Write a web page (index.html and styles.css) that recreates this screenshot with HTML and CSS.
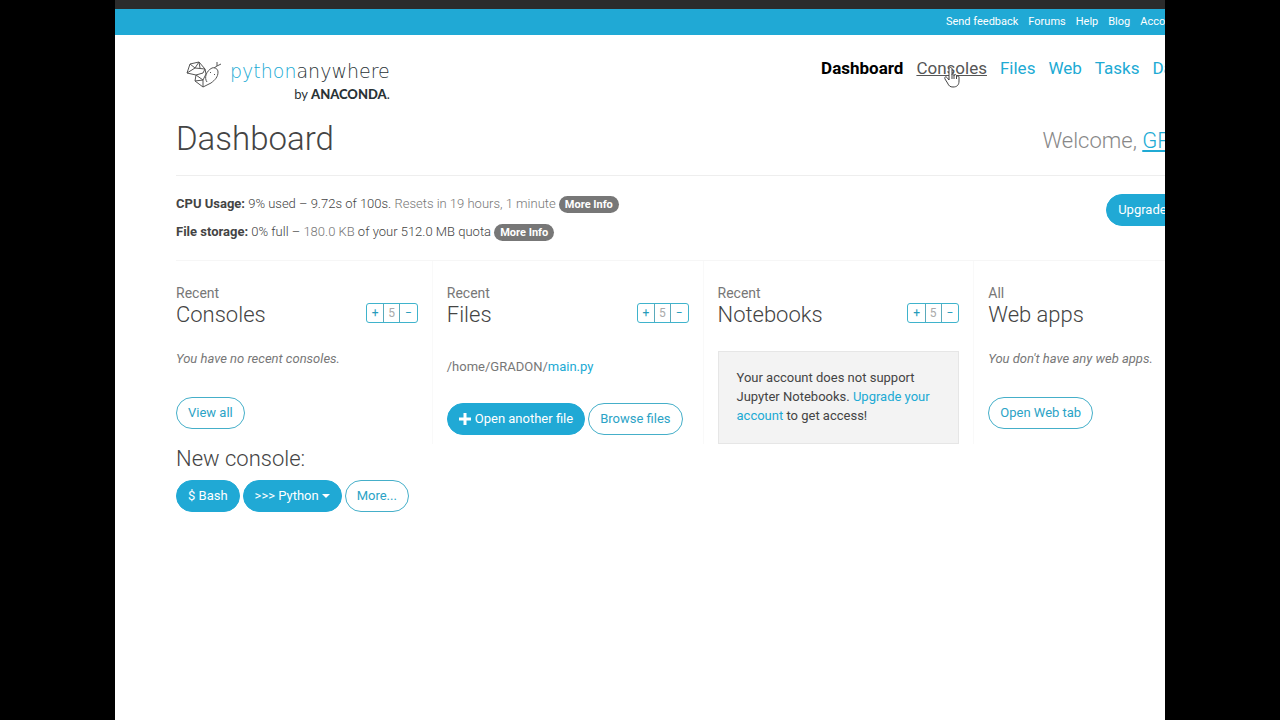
FILE: index.html
```html
<!DOCTYPE html>
<html lang="en">
<head>
<meta charset="utf-8">
<title>Dashboard : PythonAnywhere</title>
<link rel="stylesheet" href="styles.css">
</head>
<body>
<div class="screen">
  <div class="chrome"></div>
  <div class="page">
    <nav class="topbar" aria-label="Account">
      <a href="#">Send feedback</a>
      <a href="#">Forums</a>
      <a href="#">Help</a>
      <a href="#">Blog</a>
      <a href="#">Account</a>
      <a href="#">Log out</a>
    </nav>
    <header class="header">
      <a class="logo" href="#">
        <svg class="logo-mark" viewBox="0 0 36 28" aria-hidden="true">
          <path d="M1 13L4 4L13 2L19 9L20 14M1 13L10 15L17 13L19 9M4 4L9 8L13 2M9 8L1 13M9 8L19 9M13 2L14 8M10 15L9 21L17 27L25 23M10 15L17 20L20 14M9 21L17 20L17 27"/>
          <path d="M21 22C18 18 20 11 26 8C29 7 32 9 32 12C32 17 29 20 25 23M28 8L31 6L31 2M31 6L35 4"/>
          <path d="M24 12L25 13M28 14L29 15"/>
        </svg>
        <span class="logo-text">
          <span class="logo-name"><span class="logo-python">python</span>anywhere</span>
          <span class="logo-by">by <b>ANACONDA</b>.</span>
        </span>
      </a>
      <nav class="mainnav" aria-label="Main">
        <a class="current" href="#">Dashboard</a>
        <a class="hovered" href="#">Consoles<svg class="pointer" viewBox="0 0 16 22" aria-hidden="true"><path d="M5 14V3C5 1 8 1 8 3V9C8 7 10 7 10 9V10C10 8 12.500 8 12.500 10V11C12.500 9.500 15 9.500 15 11V15C15 19 13 21 9 21C6 21 5 20 3.500 17L1 13C0 11 2 10 3 11.500L5 14M8 9V13M10 10V13M12.500 11V13"/></svg></a>
        <a href="#">Files</a>
        <a href="#">Web</a>
        <a href="#">Tasks</a>
        <a href="#">Databases</a>
      </nav>
    </header>
    <main class="content">
      <div class="title">
        <h1>Dashboard</h1>
        <p class="welcome">Welcome, <a href="#">GRADON</a></p>
      </div>
      <section class="usage">
        <div>
          <p><b>CPU Usage:</b> 9% used – 9.72s of 100s. <span class="muted">Resets in 19 hours, 1 minute</span> <button class="info" type="button">More Info</button></p>
          <p><b>File storage:</b> 0% full – <span class="muted">180.0 KB</span> of your 512.0 MB quota <button class="info" type="button">More Info</button></p>
        </div>
        <button class="btn solid" type="button">Upgrade Account</button>
      </section>
      <div class="columns">
        <section class="column">
          <div class="column-head">
            <h2><small>Recent</small>Consoles</h2>
            <div class="stepper"><button type="button" aria-label="More consoles">+</button><span>5</span><button type="button" aria-label="Fewer consoles">−</button></div>
          </div>
          <p class="empty">You have no recent consoles.</p>
          <div class="actions"><button class="btn" type="button">View all</button></div>
        </section>
        <section class="column">
          <div class="column-head">
            <h2><small>Recent</small>Files</h2>
            <div class="stepper"><button type="button" aria-label="More files">+</button><span>5</span><button type="button" aria-label="Fewer files">−</button></div>
          </div>
          <p class="file">/home/GRADON/<a href="#">main.py</a></p>
          <div class="actions">
            <button class="btn solid" type="button"><svg class="plus" viewBox="0 0 12 12" aria-hidden="true"><path d="M6 0V12M0 6H12"/></svg>Open another file</button>
            <button class="btn" type="button">Browse files</button>
          </div>
        </section>
        <section class="column">
          <div class="column-head">
            <h2><small>Recent</small>Notebooks</h2>
            <div class="stepper"><button type="button" aria-label="More notebooks">+</button><span>5</span><button type="button" aria-label="Fewer notebooks">−</button></div>
          </div>
          <p class="notice">Your account does not support Jupyter Notebooks. <a href="#">Upgrade your account</a> to get access!</p>
        </section>
        <section class="column">
          <div class="column-head"><h2><small>All</small>Web apps</h2></div>
          <p class="empty">You don't have any web apps.</p>
          <div class="actions"><button class="btn" type="button">Open Web tab</button></div>
        </section>
      </div>
      <section class="new-console">
        <h2>New console:</h2>
        <div class="actions">
          <button class="btn solid" type="button">$ Bash</button>
          <button class="btn solid" type="button">&gt;&gt;&gt; Python<span class="caret"></span></button>
          <button class="btn" type="button">More...</button>
        </div>
      </section>
    </main>
  </div>
</div>
</body>
</html>
```
FILE: styles.css
```css
* { box-sizing: border-box; }
body { margin: 0; background: #000; color: #444; font: 14px/20px Roboto, sans-serif; }
h1, h2, p { margin: 0; font-weight: 300; }
b { font-weight: 700; }
a { color: #20aad4; text-decoration: none; }
button { font: inherit; cursor: pointer; }
.screen { min-height: 100vh; margin: 0 115px; background: #fff; overflow: hidden; }
.chrome { height: 9px; background: #2b2b2b; }
.page { width: 112%; }
.topbar { display: flex; justify-content: flex-end; gap: 10px; height: 26px; padding: 0 63px; background: #20a9d5; font-size: 11px; line-height: 26px; }
.topbar a { color: #fff; }
.header { display: flex; justify-content: space-between; align-items: flex-start; padding: 23px 58px 0 61px; }
.logo { display: flex; gap: 8px; padding-left: 10px; color: #2a3336; }
.logo-mark { width: 36px; height: 28px; margin-top: 2px; fill: none; stroke: #555; stroke-width: 1; }
.logo-text { display: flex; flex-direction: column; align-items: flex-end; }
.logo-name { font: 200 19px/27px "DejaVu Sans Light", "DejaVu Sans", sans-serif; }
.logo-python { color: #20aad4; }
.logo-by { font: 13px/18px Lato, sans-serif; }
.logo-by b { font-weight: 900; }
.mainnav { display: flex; gap: 13px; font-size: 17px; line-height: 20px; }
.mainnav .current { color: #000; font-weight: 700; }
.mainnav .hovered { position: relative; color: #555; text-decoration: underline; }
.pointer { position: absolute; left: 28px; top: 8px; width: 16px; height: 22px; fill: #fff; stroke: #444; stroke-width: 1; }
.content { padding: 0 61px; }
.title { display: flex; justify-content: space-between; align-items: center; height: 73px; border-bottom: 1px solid #eee; }
h1 { font-size: 33px; line-height: 40px; }
.welcome { padding-top: 4px; color: #888; font-size: 22px; line-height: 32px; }
.welcome a { text-decoration: underline; }
.usage { display: flex; justify-content: space-between; align-items: flex-start; padding: 18px 0 10px; border-bottom: 1px solid #f6f6f6; }
.usage p { margin-bottom: 8px; font-size: 13px; }
.muted { color: #777; }
.info { height: 17px; padding: 0 6px; border: 0; border-radius: 9px; background: #777; color: #fff; font-size: 11px; font-weight: 700; line-height: 17px; }
.btn { display: inline-flex; align-items: center; height: 32px; padding: 0 11px; border: 1px solid #45afc9; border-radius: 16px; background: #fff; color: #2ba3c6; font-size: 13px; white-space: nowrap; }
.btn.solid { background: #20a9d5; border-color: #20a9d5; color: #fff; }
.actions { display: flex; gap: 3px; }
.columns { display: grid; grid-template-columns: repeat(4, 1fr); column-gap: 29px; }
.column { position: relative; padding-top: 23px; }
.column + .column::before { content: ""; position: absolute; left: -15px; top: 0; bottom: 0; border-left: 1px solid #f9f9f9; }
.column-head { display: flex; justify-content: space-between; align-items: flex-end; height: 43px; }
h2 { font-size: 22px; line-height: 24px; }
h2 small { display: block; color: #777; font-size: 14px; line-height: 20px; font-weight: 400; }
.stepper { display: grid; grid-template-columns: repeat(3, 1fr); width: 52px; height: 20px; margin-bottom: 4px; border: 1px solid #3fb3cc; border-radius: 3px; color: #aaa; font-size: 12px; line-height: 18px; text-align: center; }
.stepper button { padding: 0; border: 0; background: none; color: #259bbb; }
.stepper span { border: solid #5aaabb; border-width: 0 1px; }
.empty { margin: 22px 0 28px; color: #777; font-size: 13px; font-weight: 400; font-style: italic; }
.file { margin: 30px 0 26px; color: #777; font-size: 13px; font-weight: 400; }
.plus { width: 12px; height: 12px; margin-right: 4px; stroke: #fff; stroke-width: 3; }
.notice { margin-top: 24px; padding: 16px 18px 18px; border: 1px solid #e6e6e6; background: #f3f3f3; color: #444; font-size: 13px; font-weight: 400; line-height: 19px; }
.new-console { padding-top: 3px; }
.new-console h2 { margin-bottom: 9px; }
.caret { margin-left: 3px; border: solid transparent; border-width: 4px 4px 0; border-top-color: #fff; }
```
